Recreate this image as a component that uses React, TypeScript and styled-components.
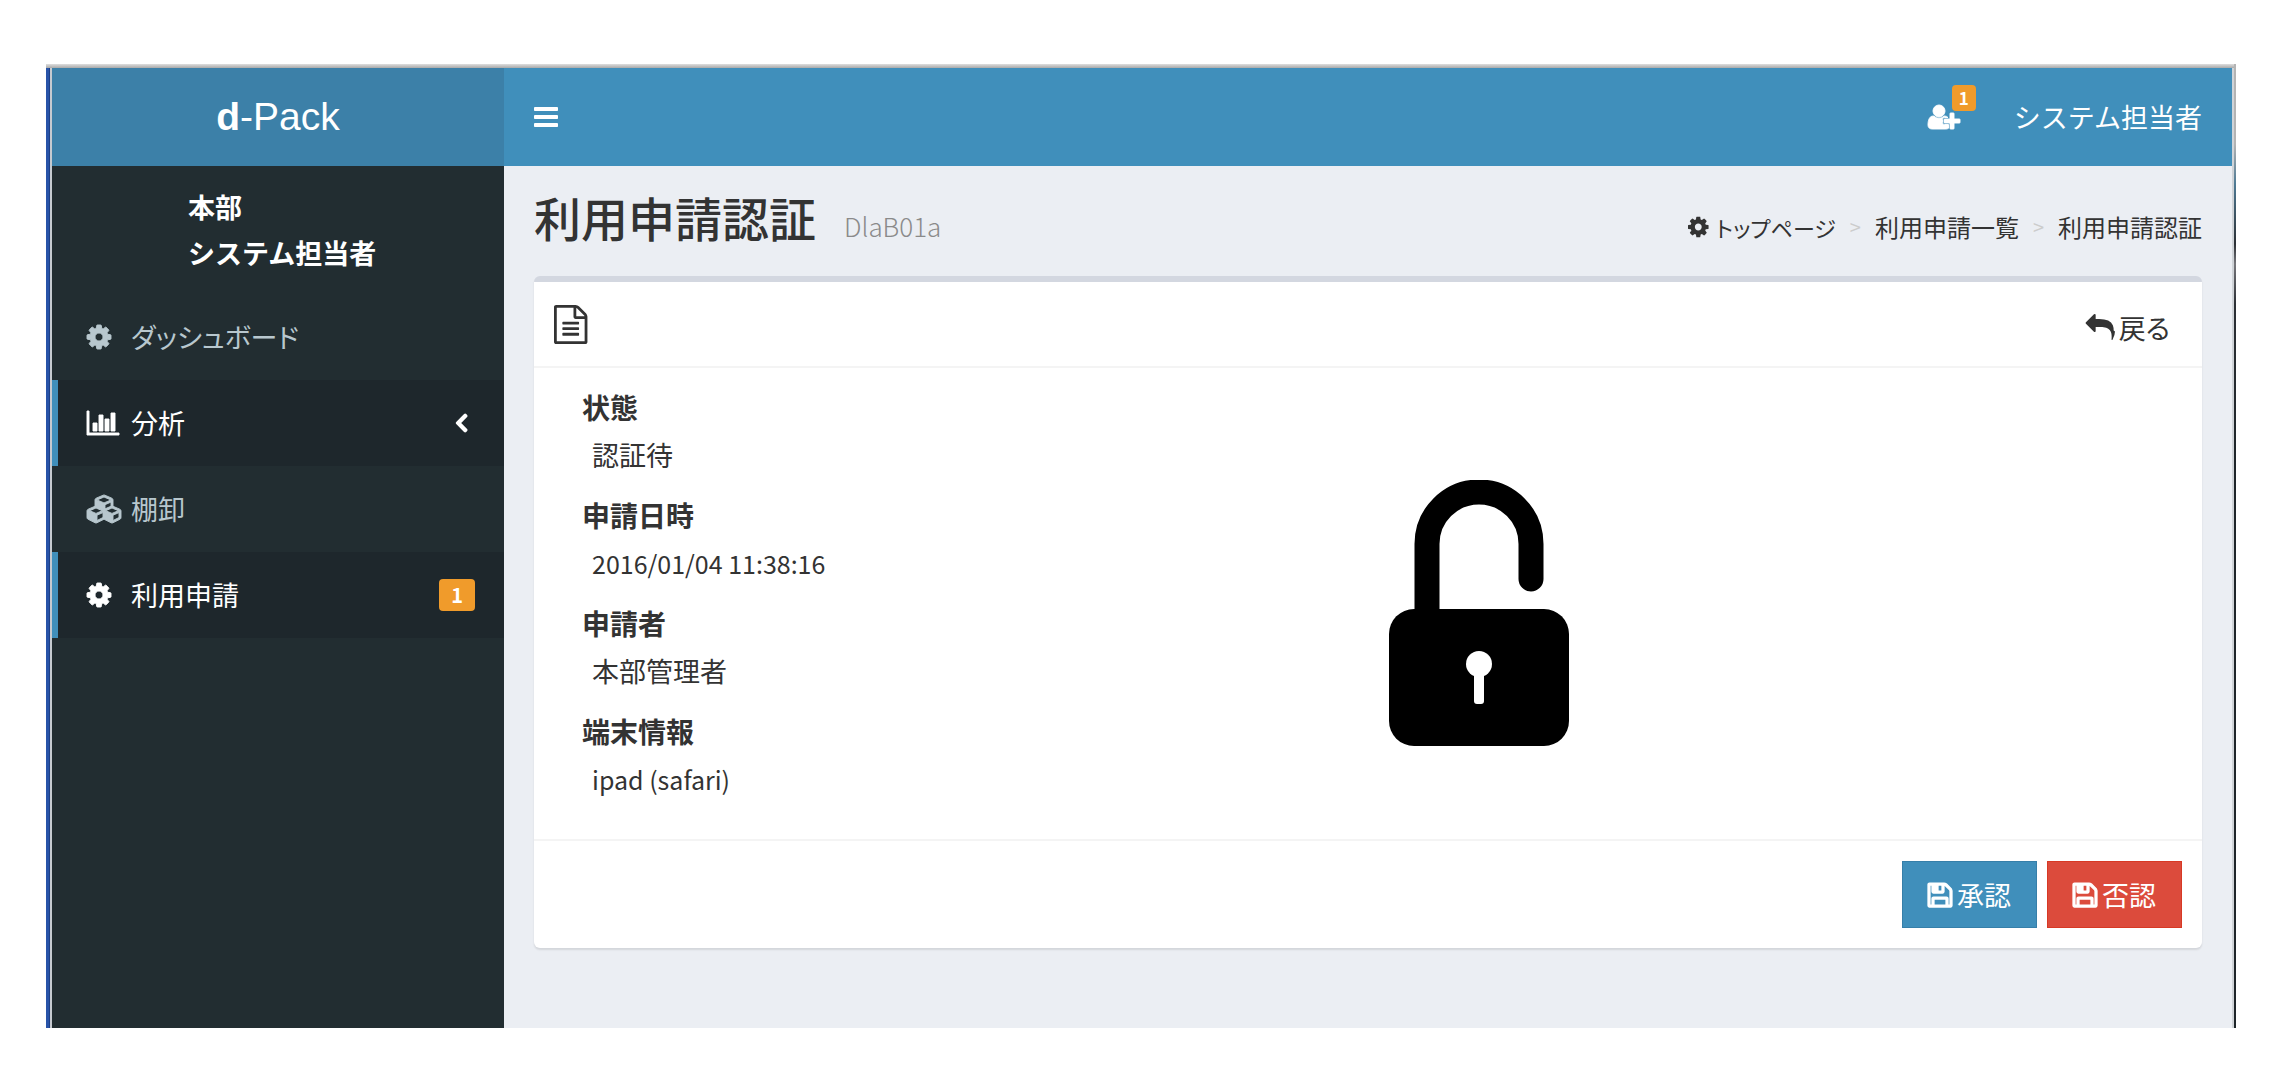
import React from 'react';
import styled, { createGlobalStyle } from 'styled-components';

const colors = {
  primary: '#408fbb',
  primaryDark: '#3c80a8',
  sidebar: '#222d31',
  sidebarActive: '#1e272c',
  sidebarText: '#b8c7ce',
  page: '#ebeef3',
  cardTop: '#d3d7e0',
  divider: '#f4f4f4',
  text: '#333333',
  muted: '#8a8a8a',
  warning: '#f09b2b',
  danger: '#dc4b3c',
};

const GlobalStyle = createGlobalStyle`
  *, *::before, *::after { box-sizing: border-box; }
  body {
    margin: 0;
    background: #ffffff;
    color: ${colors.text};
    font-family: "Noto Sans CJK JP", "Noto Sans", sans-serif;
    font-size: 27px;
    line-height: 40px;
  }
  a { color: inherit; text-decoration: none; }
  h1, p, ul, ol, dl, dd { margin: 0; padding: 0; }
  ul, ol { list-style: none; }
  button { font: inherit; cursor: pointer; }
`;

/* ---------- icons ---------- */

const icons = {
  cog: {
    box: [128, 0, 1536, 1792],
    d: 'M1152 896q0-106-75-181t-181-75-181 75-75 181 75 181 181 75 181-75 75-181zm512-109v222q0 12-8 23t-20 13l-185 28q-19 54-39 91 35 50 107 138 10 12 10 25t-9 23q-27 37-99 108t-94 71q-12 0-26-9l-138-108q-44 23-91 38-16 136-29 186-7 28-36 28h-222q-14 0-24.5-8.5t-11.5-21.5l-28-184q-49-16-90-37l-141 107q-10 9-25 9-14 0-25-11-126-114-165-168-7-10-7-23 0-12 8-23 15-21 51-66.5t54-70.5q-27-50-41-99l-183-27q-13-2-21-12.5t-8-23.5v-222q0-12 8-23t19-13l186-28q14-46 39-92-40-57-107-138-10-12-10-24 0-10 9-23 26-36 98.5-107.5t94.5-71.5q13 0 26 10l138 107q44-23 91-38 16-136 29-186 7-28 36-28h222q14 0 24.5 8.5t11.5 21.5l28 184q49 16 90 37l142-107q9-9 24-9 13 0 25 10 129 119 165 170 7 8 7 22 0 12-8 23-15 21-51 66.5t-54 70.5q26 50 41 98l183 28q13 2 21 12.5t8 23.5z',
  },
  bars: {
    box: [128, 0, 1536, 1792],
    d: 'M1664 1344v128q0 26-19 45t-45 19h-1408q-26 0-45-19t-19-45v-128q0-26 19-45t45-19h1408q26 0 45 19t19 45zm0-512v128q0 26-19 45t-45 19h-1408q-26 0-45-19t-19-45v-128q0-26 19-45t45-19h1408q26 0 45 19t19 45zm0-512v128q0 26-19 45t-45 19h-1408q-26 0-45-19t-19-45v-128q0-26 19-45t45-19h1408q26 0 45 19t19 45z',
  },
  barChart: {
    box: [0, 0, 2048, 1792],
    d: 'M640 896v512h-256v-512h256zm384-512v1024h-256v-1024h256zm1024 1152v128h-2048v-1536h128v1408h1920zm-640-896v768h-256v-768h256zm384-384v1152h-256v-1152h256z',
  },
  cubes: {
    box: [0, 0, 2304, 1792],
    d: 'M640 1632l384-192v-314l-384 164v342zm-64-454l404-173-404-173-404 173zm1088 454l384-192v-314l-384 164v342zm-64-454l404-173-404-173-404 173zm-448-293l384-165v-266l-384 164v267zm-64-379l441-189-441-189-441 189zm1088 518v416q0 36-19 67t-52 47l-448 224q-25 14-57 14t-57-14l-448-224q-4-2-7-4-2 2-7 4l-448 224q-25 14-57 14t-57-14l-448-224q-33-16-52-47t-19-67v-416q0-38 21.5-70t56.5-48l434-186v-400q0-38 21.5-70t56.5-48l448-192q23-10 50-10t50 10l448 192q35 16 56.5 48t21.5 70v400l434 186q36 16 57 48t21 70z',
  },
  angleLeft: {
    box: [576, 128, 640, 1664],
    d: 'M1203 544q0 13-10 23l-393 393 393 393q10 10 10 23t-10 23l-50 50q-10 10-23 10t-23-10l-466-466q-10-10-10-23t10-23l466-466q10-10 23-10t23 10l50 50q10 10 10 23z',
  },
  userPlus: {
    box: [0, 0, 2048, 1792],
    d: 'M704 896q-159 0-271.5-112.5t-112.5-271.5 112.5-271.5 271.5-112.5 271.5 112.5 112.5 271.5-112.5 271.5-271.5 112.5zm960 128h352q13 0 22.5 9.5t9.5 22.5v192q0 13-9.5 22.5t-22.5 9.5h-352v352q0 13-9.5 22.5t-22.5 9.5h-192q-13 0-22.5-9.5t-9.5-22.5v-352h-352q-13 0-22.5-9.5t-9.5-22.5v-192q0-13 9.5-22.5t22.5-9.5h352v-352q0-13 9.5-22.5t22.5-9.5h192q13 0 22.5 9.5t9.5 22.5v352zm-736 224q0 52 38 90t90 38h256v238q-68 50-171 50h-874q-121 0-194-69t-73-190q0-53 3.5-103.5t14-109 26.5-108.5 43-97.5 62-81 85.5-53.5 111.5-20q19 0 39 17 79 61 154.5 91.5t164.5 30.5 164.5-30.5 154.5-91.5q20-17 39-17 132 0 217 96h-223q-52 0-90 38t-38 90v192z',
  },
  reply: {
    box: [0, 0, 1792, 1792],
    d: 'M1792 1120q0 166-127 451-3 7-10.5 24t-13.5 30-13 22q-12 17-28 17-15 0-23.5-10t-8.5-25q0-9 2.5-26.5t2.5-23.5q5-68 5-123 0-112-19.5-200.5t-54-153.5-89-112-117-80-147.5-49-171.5-25-201.5-7h-224v256q0 26-19 45t-45 19-45-19l-512-512q-19-19-19-45t19-45l512-512q19-19 45-19t45 19 19 45v256h224q713 0 875 403 53 134 53 333z',
  },
  save: {
    box: [128, 0, 1536, 1792],
    d: 'M512 1536h768v-384h-768v384zm896 0h128v-896q0-14-10-38.5t-20-34.5l-281-281q-10-10-34-20t-39-10v416q0 40-28 68t-68 28h-576q-40 0-68-28t-28-68v-416h-128v1280h128v-416q0-40 28-68t68-28h832q40 0 68 28t28 68v416zm-384-928v-320q0-13-9.5-22.5t-22.5-9.5h-192q-13 0-22.5 9.5t-9.5 22.5v320q0 13 9.5 22.5t22.5 9.5h192q13 0 22.5-9.5t9.5-22.5zm640 32v928q0 40-28 68t-68 28h-1344q-40 0-68-28t-28-68v-1344q0-40 28-68t68-28h928q40 0 88 20t76 48l280 280q28 28 48 76t20 88z',
  },
  fileText: {
    box: [128, 0, 1536, 1792],
    d: 'M1596 380q28 28 48 76t20 88v1152q0 40-28 68t-68 28h-1344q-40 0-68-28t-28-68v-1600q0-40 28-68t68-28h896q40 0 88 20t76 48zm-444-244v376h376q-10-29-22-41l-313-313q-12-12-41-22zm384 1528v-1024h-416q-40 0-68-28t-28-68v-416h-768v1536h1280zm-1024-864q0-14 9-23t23-9h704q14 0 23 9t9 23v64q0 14-9 23t-23 9h-704q-14 0-23-9t-9-23v-64zm736 224q14 0 23 9t9 23v64q0 14-9 23t-23 9h-704q-14 0-23-9t-9-23v-64q0-14 9-23t23-9h704zm0 256q14 0 23 9t9 23v64q0 14-9 23t-23 9h-704q-14 0-23-9t-9-23v-64q0-14 9-23t23-9h704z',
  },
};

type IconName = keyof typeof icons;

const IconSvg = styled.svg<{ $size: number; $weight: number }>`
  display: block;
  flex: none;
  overflow: visible;
  height: ${(p) => p.$size}px;
  fill: currentColor;
  stroke: currentColor;
  stroke-width: ${(p) => p.$weight};
`;

function Icon({ name, size = 28, weight = 0 }: { name: IconName; size?: number; weight?: number }) {
  const { box, d } = icons[name];
  return (
    <IconSvg $size={size} $weight={weight} viewBox={box.join(' ')} aria-hidden="true">
      <path d={d} />
    </IconSvg>
  );
}

/* ---------- window ---------- */

const Window = styled.div`
  display: flex;
  flex-direction: column;
  min-height: calc(100vh - 126px);
  margin: 64px 38px 62px 46px;
  background:
    linear-gradient(#b4b4b4 80px, #4f7a94 120px, #2c3035 180px, #77777c 200px, #2c3035 240px, #1e2529 400px)
      right / 2px 100% no-repeat,
    linear-gradient(#dedede, #a9a9a9) top / 100% 4px no-repeat,
    linear-gradient(90deg, #2853a8 3px, #1c3f88 3px, #1c3f88 4px, #c6cad0 4px) left / 6px 100% no-repeat,
    #d0d4d8;
  padding: 4px 4px 0 6px;
`;

const Header = styled.header`
  display: flex;
  height: 98px;
  background: ${colors.primary};
  color: #ffffff;
`;

const Logo = styled.a`
  display: flex;
  flex: none;
  align-items: center;
  justify-content: center;
  width: 452px;
  background: ${colors.primaryDark};
  font-family: "Liberation Sans", Arial, sans-serif;
  font-size: 39px;
`;

const Navbar = styled.nav`
  display: flex;
  flex: 1;
  align-items: center;
  justify-content: space-between;
  padding: 0 30px;
`;

const IconButton = styled.button`
  display: flex;
  position: relative;
  padding: 0;
  border: 0;
  background: none;
  color: inherit;
`;

const UserArea = styled.div`
  display: flex;
  align-items: center;
  gap: 54px;
`;

const Badge = styled.span`
  padding: 0 12px;
  border-radius: 4px;
  background: ${colors.warning};
  color: #ffffff;
  font-size: 20px;
  font-weight: 700;
  line-height: 32px;
`;

const CornerBadge = styled(Badge)`
  position: absolute;
  top: -18px;
  right: -16px;
  padding: 0 7px;
  font-size: 17px;
  line-height: 26px;
`;

const Kana = styled.span`
  font-feature-settings: "palt";
`;

const Columns = styled.div`
  display: flex;
  flex: 1;
`;

/* ---------- sidebar ---------- */

const Sidebar = styled.aside`
  flex: none;
  width: 452px;
  background: ${colors.sidebar};
  color: ${colors.sidebarText};
`;

const UserPanel = styled.div`
  padding: 18px 24px 18px 136px;
  color: #ffffff;
  font-weight: 700;
  line-height: 46px;
`;

const MenuLink = styled.a<{ $active?: boolean }>`
  display: flex;
  align-items: center;
  height: 86px;
  padding: 0 29px;
  border-left: 6px solid ${(p) => (p.$active ? colors.primary : 'transparent')};
  background: ${(p) => (p.$active ? colors.sidebarActive : 'transparent')};
  color: ${(p) => (p.$active ? '#ffffff' : 'inherit')};
`;

const MenuIcon = styled.span`
  display: flex;
  flex: none;
  width: 44px;
`;

const MenuLabel = styled.span`
  flex: 1;
`;

const MenuArrow = styled.span`
  padding-right: 8px;
`;

const menu: { icon: IconName; label: string; active?: boolean; arrow?: boolean; count?: number }[] = [
  { icon: 'cog', label: 'ダッシュボード' },
  { icon: 'barChart', label: '分析', active: true, arrow: true },
  { icon: 'cubes', label: '棚卸' },
  { icon: 'cog', label: '利用申請', active: true, count: 1 },
];

/* ---------- content ---------- */

const Content = styled.main`
  flex: 1;
  padding: 28px 30px 48px;
  background: ${colors.page};
`;

const PageHead = styled.div`
  display: flex;
  align-items: center;
  justify-content: space-between;
  height: 54px;
  margin-bottom: 28px;
`;

const Title = styled.h1`
  font-size: 47px;
  font-weight: 500;
  line-height: 54px;
`;

const ScreenId = styled.small`
  margin-left: 28px;
  color: ${colors.muted};
  font-size: 26px;
  font-weight: 300;
`;

const Crumbs = styled.ol`
  display: flex;
  align-items: center;
  padding-top: 12px;
  font-size: 24px;
`;

const Crumb = styled.li`
  display: flex;
  align-items: center;

  & + &::before {
    content: ">";
    padding: 0 14px;
    color: #cccccc;
    font-size: 20px;
  }
`;

const CrumbLink = styled.a`
  display: flex;
  align-items: center;
`;

const HomeLink = styled(CrumbLink)`
  gap: 8px;
  font-size: 22px;
`;

const Card = styled.section`
  border-top: 6px solid ${colors.cardTop};
  border-radius: 6px;
  background: #ffffff;
  box-shadow: 0 2px 2px rgba(0, 0, 0, 0.1);
`;

const CardHead = styled.div`
  display: flex;
  align-items: center;
  justify-content: space-between;
  height: 86px;
  padding: 0 32px 0 20px;
  border-bottom: 2px solid ${colors.divider};
`;

const BackLink = styled.a`
  display: flex;
  align-items: center;
  gap: 4px;
  padding-top: 8px;
`;

const CardBody = styled.div`
  display: grid;
  grid-template-columns: 1fr 1fr;
`;

const Details = styled.dl`
  padding: 15px 48px 24px;
  line-height: 48px;
`;

const Term = styled.dt`
  font-size: 28px;
  font-weight: 700;
`;

const Value = styled.dd`
  padding: 0 10px;
  margin-bottom: 12px;
`;

const LatinValue = styled(Value)`
  font-size: 25px;
`;

const Picture = styled.div`
  padding: 112px 21px 0;
`;

const Lock = styled.svg`
  display: block;
  width: 180px;
  height: 266px;
`;

const CardFoot = styled.div`
  display: flex;
  justify-content: flex-end;
  gap: 10px;
  padding: 20px;
  border-top: 2px solid ${colors.divider};
`;

const ActionButton = styled.button<{ $tone: 'primary' | 'danger' }>`
  display: flex;
  align-items: center;
  gap: 5px;
  height: 67px;
  padding: 0 25px;
  border: 1px solid ${(p) => (p.$tone === 'primary' ? '#367fa9' : '#d73925')};
  background: ${(p) => (p.$tone === 'primary' ? colors.primary : colors.danger)};
  color: #ffffff;
`;

export default function App() {
  return (
    <>
      <GlobalStyle />
      <Window>
        <Header>
          <Logo href="#">
            <b>d</b>-Pack
          </Logo>
          <Navbar>
            <IconButton type="button" aria-label="メニュー">
              <Icon name="bars" />
            </IconButton>
            <UserArea>
              <IconButton type="button" aria-label="利用申請">
                <Icon name="userPlus" weight={60} />
                <CornerBadge>1</CornerBadge>
              </IconButton>
              <a href="#">システム担当者</a>
            </UserArea>
          </Navbar>
        </Header>
        <Columns>
          <Sidebar>
            <UserPanel>
              <p>本部</p>
              <p>システム担当者</p>
            </UserPanel>
            <ul>
              {menu.map((item) => (
                <li key={item.label}>
                  <MenuLink href="#" $active={item.active}>
                    <MenuIcon>
                      <Icon name={item.icon} weight={60} />
                    </MenuIcon>
                    <MenuLabel>
                      <Kana>{item.label}</Kana>
                    </MenuLabel>
                    {item.arrow && (
                      <MenuArrow>
                        <Icon name="angleLeft" weight={120} />
                      </MenuArrow>
                    )}
                    {item.count && <Badge>{item.count}</Badge>}
                  </MenuLink>
                </li>
              ))}
            </ul>
          </Sidebar>
          <Content>
            <PageHead>
              <Title>
                利用申請認証
                <ScreenId>DlaB01a</ScreenId>
              </Title>
              <Crumbs>
                <Crumb>
                  <HomeLink href="#">
                    <Icon name="cog" size={24} />
                    <Kana>トップページ</Kana>
                  </HomeLink>
                </Crumb>
                <Crumb>
                  <CrumbLink href="#">利用申請一覧</CrumbLink>
                </Crumb>
                <Crumb>利用申請認証</Crumb>
              </Crumbs>
            </PageHead>
            <Card>
              <CardHead>
                <Icon name="fileText" size={39} />
                <BackLink href="#">
                  <Icon name="reply" />
                  <Kana>戻る</Kana>
                </BackLink>
              </CardHead>
              <CardBody>
                <Details>
                  <Term>状態</Term>
                  <Value>認証待</Value>
                  <Term>申請日時</Term>
                  <LatinValue>2016/01/04 11:38:16</LatinValue>
                  <Term>申請者</Term>
                  <Value>本部管理者</Value>
                  <Term>端末情報</Term>
                  <LatinValue>ipad (safari)</LatinValue>
                </Details>
                <Picture>
                  <Lock viewBox="0 0 180 266" role="img" aria-label="ロック解除">
                    <path
                      d="M38 140V64a52 52 0 0 1 104 0V99"
                      fill="none"
                      stroke="#000000"
                      strokeWidth="25"
                      strokeLinecap="round"
                    />
                    <rect y="129" width="180" height="137" rx="25" fill="#000000" />
                    <circle cx="90" cy="184" r="13" fill="#ffffff" />
                    <rect x="85" y="190" width="10" height="34" rx="3" fill="#ffffff" />
                  </Lock>
                </Picture>
              </CardBody>
              <CardFoot>
                <ActionButton type="button" $tone="primary">
                  <Icon name="save" weight={80} />
                  承認
                </ActionButton>
                <ActionButton type="button" $tone="danger">
                  <Icon name="save" weight={80} />
                  否認
                </ActionButton>
              </CardFoot>
            </Card>
          </Content>
        </Columns>
      </Window>
    </>
  );
}
